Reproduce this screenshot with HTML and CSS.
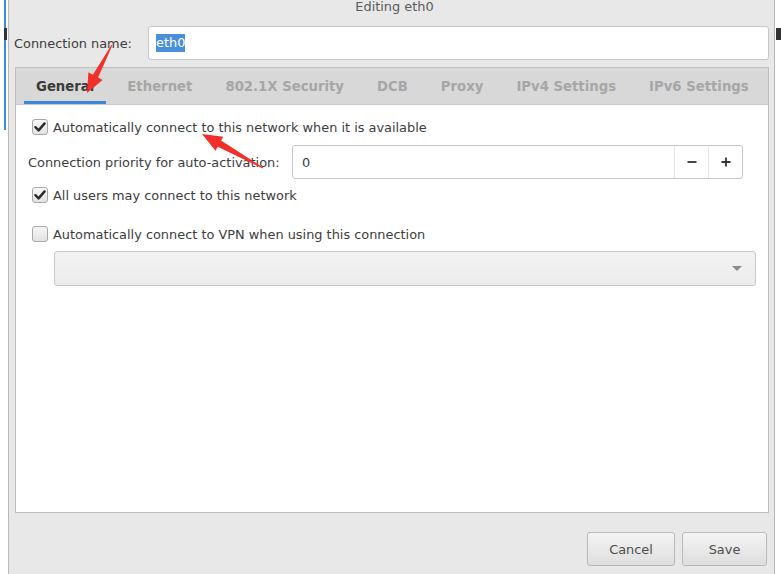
FILE: index.html
```html
<!DOCTYPE html>
<html>
<head>
<meta charset="utf-8">
<title>Editing eth0</title>
<link rel="stylesheet" href="styles.css">
</head>
<body>
<div class="lstrip"><div class="lline"><div class="lmark"></div></div></div>
<div class="dialog">
  <div class="title">Editing eth0</div>
  <div class="name-row">
    <div class="name-label">Connection name:</div>
    <div class="entry"><span class="sel">eth0</span></div>
  </div>
  <div class="notebook">
    <div class="tabs">
      <div class="tab active">General</div>
      <div class="tab">Ethernet</div>
      <div class="tab">802.1X Security</div>
      <div class="tab">DCB</div>
      <div class="tab">Proxy</div>
      <div class="tab">IPv4 Settings</div>
      <div class="tab">IPv6 Settings</div>
    </div>
    <div class="pane">
      <div class="check-row r1">
        <span class="check on"><svg viewBox="0 0 16 16" width="16" height="16"><path d="M3.4 8.2 L6.6 11.4 L12.6 4.4" fill="none" stroke="#2b2b2b" stroke-width="2.4" stroke-linecap="round" stroke-linejoin="round"/></svg></span>
        <span>Automatically connect to this network when it is available</span>
      </div>
      <div class="spin-row">
        <div class="spin-label">Connection priority for auto-activation:</div>
        <div class="spin">
          <div class="spin-value">0</div>
          <div class="spin-btn"><svg viewBox="0 0 12 12" width="12" height="12"><path d="M1.5 6 H10.5" stroke="#333" stroke-width="1.8"/></svg></div>
          <div class="spin-btn"><svg viewBox="0 0 12 12" width="12" height="12"><path d="M1.5 6 H10.5 M6 1.5 V10.5" stroke="#333" stroke-width="1.8"/></svg></div>
        </div>
      </div>
      <div class="check-row r3">
        <span class="check on"><svg viewBox="0 0 16 16" width="16" height="16"><path d="M3.4 8.2 L6.6 11.4 L12.6 4.4" fill="none" stroke="#2b2b2b" stroke-width="2.4" stroke-linecap="round" stroke-linejoin="round"/></svg></span>
        <span>All users may connect to this network</span>
      </div>
      <div class="check-row r4">
        <span class="check"></span>
        <span>Automatically connect to VPN when using this connection</span>
      </div>
      <div class="combo"><span class="caret"></span></div>
    </div>
  </div>
  <div class="actions">
    <div class="btn cancel">Cancel</div>
    <div class="btn save">Save</div>
  </div>
</div>
<div class="rstrip"><div class="rmark"></div></div>
<svg class="arrows" width="781" height="574" viewBox="0 0 781 574">
  <polygon fill="#f2302b" points="112.4,45.2 98.1,77.5 102.6,79.9 87,93 88.4,72.3 92.9,74.7 111.6,44.8"/>
  <polygon fill="#f2302b" points="263.2,167.6 221.1,140.6 223.3,136.7 202,134 215.5,150.7 217.7,146.8 262.8,168.4"/>
</svg>
</body>
</html>
```

FILE: styles.css
```css
html, body {
  margin: 0;
  padding: 0;
}
body {
  width: 781px;
  height: 574px;
  overflow: hidden;
  display: flex;
  background: #ffffff;
  font-family: "DejaVu Sans", sans-serif;
  font-size: 12.9px;
  color: #3c3c3c;
  position: relative;
}
.lstrip {
  width: 8px;
  flex: none;
}
.lline {
  margin-left: 4px;
  width: 2px;
  height: 130px;
  background: #3d8be0;
  display: flex;
  flex-direction: column;
}
.lmark {
  margin-top: 28px;
  height: 12px;
  width: 3px;
  background: #333;
}
.rstrip {
  width: 6px;
  flex: none;
}
.rmark {
  margin-top: 28px;
  margin-left: 1px;
  height: 12px;
  width: 5px;
  background: #333;
}
.dialog {
  width: 755px;
  flex: none;
  border-left: 1px solid #b8b8b8;
  border-right: 1px solid #b8b8b8;
  background: #e8e8e8;
  padding: 0 5px;
  display: flex;
  flex-direction: column;
}
.title {
  height: 14px;
  line-height: 14px;
  text-align: center;
  color: #5a5a5a;
  padding-left: 6px;
}
.name-row {
  margin-top: 12px;
  height: 34px;
  display: flex;
  align-items: center;
}
.name-label {
  width: 134px;
  flex: none;
}
.entry {
  flex: 1;
  height: 32px;
  background: #ffffff;
  border: 1px solid #c6c6c6;
  border-radius: 3px;
  display: flex;
  align-items: center;
  padding-left: 7px;
}
.sel {
  background: #4a8fd9;
  color: #ffffff;
  padding: 1px 0 2px;
}
.notebook {
  margin-top: 7px;
  margin-left: 1px;
  height: 444px;
  border: 1px solid #bebebe;
  display: flex;
  flex-direction: column;
}
.tabs {
  height: 36px;
  background: #d8d8d8;
  border-bottom: 1px solid #c6c6c6;
  display: flex;
  padding-left: 3.5px;
}
.tab {
  margin: 0 4.5px;
  padding: 3px 12px 0;
  border-bottom: 3px solid transparent;
  display: flex;
  align-items: center;
  font-weight: bold;
  font-size: 13.25px;
  color: #a6a6a6;
}
.tab.active {
  color: #3a3a3a;
  border-bottom-color: #3d87d8;
}
.pane {
  flex: 1;
  background: #ffffff;
  padding: 13px 12px 0;
  display: flex;
  flex-direction: column;
}
.check-row {
  height: 18px;
  display: flex;
  align-items: center;
}
.check {
  width: 14px;
  height: 14px;
  margin-left: 4px;
  margin-right: 5px;
  border: 1px solid #a9a9a9;
  border-radius: 3px;
  background: linear-gradient(#f7f7f7, #e2e2e2);
  display: flex;
  align-items: center;
  justify-content: center;
  flex: none;
}
.check svg {
  flex: none;
}
.spin-row {
  margin-top: 9px;
  height: 34px;
  display: flex;
  align-items: center;
}
.spin-label {
  width: 264px;
  flex: none;
}
.spin {
  width: 449px;
  height: 32px;
  border: 1px solid #c6c6c6;
  border-radius: 3px;
  background: #ffffff;
  display: flex;
}
.spin-value {
  flex: 1;
  padding-left: 9px;
  display: flex;
  align-items: center;
}
.spin-btn {
  width: 33px;
  border-left: 1px solid #e4e4e4;
  display: flex;
  align-items: center;
  justify-content: center;
}
.r3 {
  margin-top: 7px;
}
.r4 {
  margin-top: 21px;
}
.combo {
  margin-top: 8px;
  margin-left: 26px;
  width: 700px;
  height: 33px;
  border: 1px solid #c8c8c8;
  border-radius: 3px;
  background: linear-gradient(#f2f2f2, #ececec);
  display: flex;
  align-items: center;
  justify-content: flex-end;
}
.caret {
  width: 0;
  height: 0;
  border-left: 5px solid transparent;
  border-right: 5px solid transparent;
  border-top: 5px solid #8c8c8c;
  margin-right: 13px;
}
.actions {
  margin-top: 19px;
  display: flex;
  justify-content: flex-end;
  gap: 7px;
  padding-right: 2px;
}
.btn {
  height: 32px;
  border: 1px solid #b9b9b9;
  border-radius: 3px;
  background: linear-gradient(#f4f4f4, #dedede);
  display: flex;
  align-items: center;
  justify-content: center;
  color: #4e4e4e;
}
.cancel {
  width: 86px;
}
.save {
  width: 83px;
}
.arrows {
  position: absolute;
  left: 0;
  top: 0;
  pointer-events: none;
}
```
